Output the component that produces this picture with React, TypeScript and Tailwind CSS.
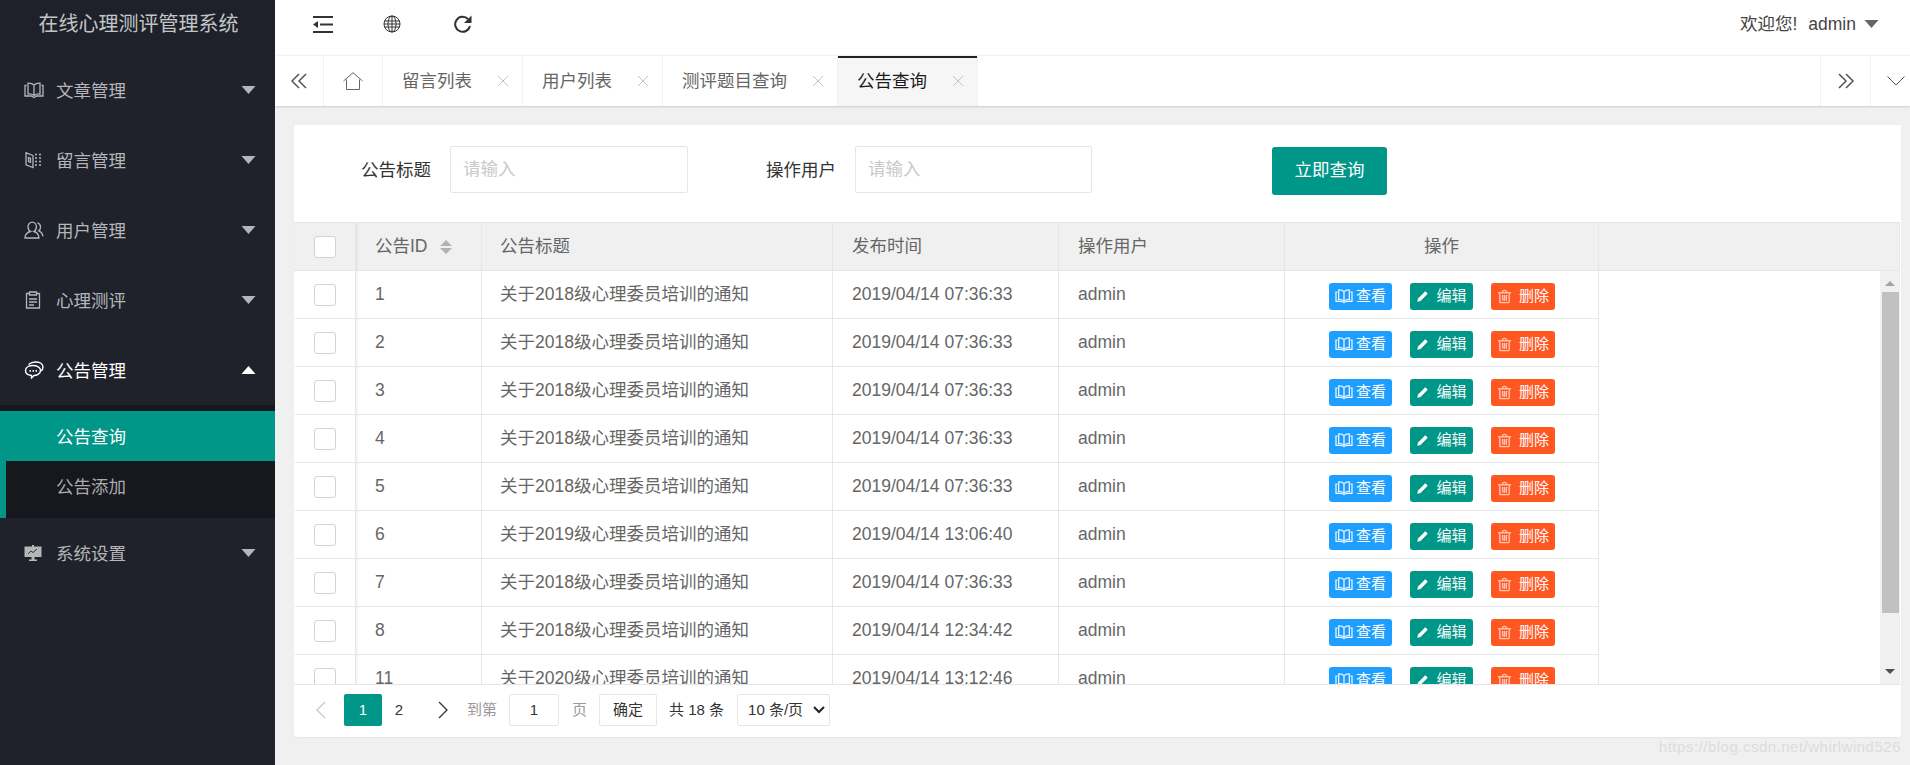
const rows = [
  ["1", "关于2018级心理委员培训的通知", "2019/04/14 07:36:33"],
  ["2", "关于2018级心理委员培训的通知", "2019/04/14 07:36:33"],
  ["3", "关于2018级心理委员培训的通知", "2019/04/14 07:36:33"],
  ["4", "关于2018级心理委员培训的通知", "2019/04/14 07:36:33"],
  ["5", "关于2018级心理委员培训的通知", "2019/04/14 07:36:33"],
  ["6", "关于2019级心理委员培训的通知", "2019/04/14 13:06:40"],
  ["7", "关于2018级心理委员培训的通知", "2019/04/14 07:36:33"],
  ["8", "关于2018级心理委员培训的通知", "2019/04/14 12:34:42"],
  ["11", "关于2020级心理委员培训的通知", "2019/04/14 13:12:46"],
];

const FONT = "font-['Liberation_Sans','Noto_Sans_CJK_SC',sans-serif]";

function BookIcon({ className }: { className?: string }) {
  return (
    <svg viewBox="0 0 20 18" fill="none" stroke="currentColor" strokeWidth="1.3" className={className}>
      <path d="M10 4C8.5 2.6 6.5 2 4 2.2V13c2.5-.2 4.5.3 6 1.5 1.5-1.2 3.500-1.700 6-1.500V2.200C13.500 2 11.500 2.600 10 4zM10 4v10.500" />
      <path d="M2.500 4.500H1V15h6.500l2.500 1.500 2.500-1.500H19V4.500h-1.500" />
    </svg>
  );
}

function NoteIcon({ className }: { className?: string }) {
  return (
    <svg viewBox="0 0 18 18" fill="none" stroke="currentColor" strokeWidth="1.3" className={className}>
      <path d="M9 4.5 2 1.800v12l7 2.700zM4.500 6.500l2 .8v4l-2-.8z" />
      <path d="M11 3.500h2M15 3.500h2M11 7h2M15 7h2M11 10.500h2M15 10.500h2M11 14h2M15 14h2" />
    </svg>
  );
}

function UserIcon({ className }: { className?: string }) {
  return (
    <svg viewBox="0 0 20 18" fill="none" stroke="currentColor" strokeWidth="1.3" className={className}>
      <path d="M6.500 10.500C4.500 9.500 4 7.800 4 5.800 4 3.200 5.800 1.200 8.200 1.200s4.200 2 4.200 4.600c0 2-.6 3.700-2.500 4.700 2.500.6 4.500 2.500 5 5.800v.7H1v-.7c.5-3.300 2.800-5.200 5.500-5.800z" />
      <path d="M13.500 1.800c2 .7 3 2.300 3 4.200 0 1.500-.5 3-1.700 3.800 2 .8 3.700 2.500 4.200 5.500" />
    </svg>
  );
}

function ClipIcon({ className }: { className?: string }) {
  return (
    <svg viewBox="0 0 18 18" fill="none" stroke="currentColor" strokeWidth="1.3" className={className}>
      <path d="M5.500 2.500H2.500v14.500h13V2.500h-3M5.500 1h7v3h-7zM5 8h8M5 11h8M5 14h5" />
    </svg>
  );
}

function ChatIcon({ className }: { className?: string }) {
  return (
    <svg viewBox="0 0 20 18" fill="none" stroke="currentColor" strokeWidth="1.4" className={className}>
      <path d="M9 4.500c4 0 7.500 1.800 7.500 5 0 3-3.500 5-6.500 5l-2.500 2.500v-2.500c-3-.3-6-2-6-5 0-3.200 3.500-5 7.500-5z" />
      <path d="M4.500 3.500C6.500 1.800 9 1 11.500 1c3.500 0 7.500 1.500 7.500 5 0 1.800-.7 3-2 4" />
      <path d="M5.500 9.800h1.500M8.500 9.800H10M11.500 9.800H13" strokeWidth="1.8" />
    </svg>
  );
}

function BoardIcon({ className }: { className?: string }) {
  return (
    <svg viewBox="0 0 18 18" className={className}>
      <path fill="currentColor" d="M8 1h2v1.500h7.500V13h-7v2.500H13V17H5v-1.500h2.500V13h-7V2.500H8z" />
      <path fill="none" stroke="#1f222b" strokeWidth="0.9" d="M4 10l3-3 2 1.500 4-3.500" />
    </svg>
  );
}

function PenIcon({ className }: { className?: string }) {
  return (
    <svg viewBox="0 0 16 16" fill="currentColor" className={className}>
      <path d="M11.500 1.500l3 3-9 9-4 1 1-4z" />
    </svg>
  );
}

function TrashIcon({ className }: { className?: string }) {
  return (
    <svg viewBox="0 0 16 16" fill="none" stroke="currentColor" strokeWidth="1.5" className={className}>
      <path d="M1 4h14M5.500 3.500C6 2 7 1.500 8 1.500s2 .5 2.500 2M3 5v8.500c0 .6.400 1 1 1h8c.6 0 1-.4 1-1V5M6 6.500v6M8 6.500v6M10 6.500v6" />
    </svg>
  );
}

function Caret({ up, color }: { up?: boolean; color: string }) {
  return (
    <svg viewBox="0 0 14 8" className="w-[15px] h-2">
      <path fill={color} d={up ? "M7 0l7 8H0z" : "M0 0h14L7 8z"} />
    </svg>
  );
}

function MenuItem({ icon, label, open }: { icon: React.ReactNode; label: string; open?: boolean }) {
  return (
    <div className={`flex items-center h-[70px] pl-6 pr-[19px] ${open ? "text-white" : "text-[#b5b6b9]"}`}>
      <span className="w-[32px] flex">{icon}</span>
      <span className="flex-1 text-[17.5px] pt-0.5">{label}</span>
      <Caret up={open} color={open ? "#ffffff" : "#b5b6b9"} />
    </div>
  );
}

function Tab({ label, wide, active }: { label: string; wide?: boolean; active?: boolean }) {
  return (
    <div
      className={`relative flex items-center pl-[19px] text-[17.5px] border-r border-[#f2f2f2] ${wide ? "w-[175px]" : "w-[140px]"} ${
        active ? "bg-[#f6f6f6] text-[#1a1a1a]" : "text-[#666666]"
      }`}
    >
      {active && <div className="absolute left-0 right-0 top-0 h-0.5 bg-[#20222a]" />}
      <span>{label}</span>
      <svg viewBox="0 0 10 10" className="absolute right-[14px] top-[20px] w-2.5 h-2.5" fill="none" stroke="#c2c2c2" strokeWidth="1">
        <path d="M0 0l10 10M10 0L0 10" />
      </svg>
    </div>
  );
}

function Check() {
  return <div className="w-[22px] h-[22px] rounded-[3px] border border-[#d2d2d2] bg-white" />;
}

function ActionButton({ bg, icon, label, w }: { bg: string; icon: React.ReactNode; label: string; w: string }) {
  return (
    <div className={`flex items-center justify-center gap-[3px] h-[27px] rounded-[3px] text-white text-[15px] ${bg} ${w}`}>
      {icon}
      <span>{label}</span>
    </div>
  );
}

export default function App() {
  return (
    <div className={`relative flex w-[1910px] h-[765px] overflow-hidden bg-[#f0f0f0] ${FONT}`}>
      <aside className="w-[275px] shrink-0 bg-[#1f222b] flex flex-col">
        <div className="h-[55px] shrink-0 flex items-center justify-center pl-0.5 pb-[7px] text-[20px] text-[#c4c5c7] bg-[#1e212a]">
          在线心理测评管理系统
        </div>
        <MenuItem icon={<BookIcon className="w-5 h-[18px]" />} label="文章管理" />
        <MenuItem icon={<NoteIcon className="w-[18px] h-[18px]" />} label="留言管理" />
        <MenuItem icon={<UserIcon className="w-5 h-[18px]" />} label="用户管理" />
        <MenuItem icon={<ClipIcon className="w-[18px] h-[18px]" />} label="心理测评" />
        <MenuItem icon={<ChatIcon className="w-5 h-[18px]" />} label="公告管理" open />
        <div className="h-[113px] shrink-0 bg-[#17181d] pt-1.5 flex flex-col">
          <div className="h-[50px] flex items-center pl-14 pt-0.5 bg-[#009688] text-white text-[17.5px]">公告查询</div>
          <div className="flex-1 border-l-[6px] border-[#009688] flex items-center pl-[50px] pb-1 text-[#a9aaac] text-[17.5px]">公告添加</div>
        </div>
        <MenuItem icon={<BoardIcon className="w-[18px] h-[18px]" />} label="系统设置" />
      </aside>

      <main className="flex-1 min-w-0 flex flex-col">
        <header className="h-[55px] shrink-0 bg-white flex items-center pb-[7px] text-[#393d49]">
          <div className="flex items-center flex-1">
            <svg viewBox="0 0 20 17" className="ml-[38px] w-5 h-[17px]" fill="#333333">
              <path d="M0 0h20v2H0zM7 7.500h13v2H7zM0 15h20v2H0zM0 8.500L5 5v7z" />
            </svg>
            <svg viewBox="0 0 18 18" className="ml-[50px] w-[18px] h-[18px]" fill="none" stroke="#333333" strokeWidth="1">
              <circle cx="9" cy="9" r="8" />
              <ellipse cx="9" cy="9" rx="4" ry="8" />
              <path d="M9 1v16M1.500 6h15M1.500 12h15M1 9h16" />
            </svg>
            <svg viewBox="0 0 18 18" className="ml-[53px] w-[18px] h-[18px]" fill="none" stroke="#333333" strokeWidth="2">
              <path d="M16 11A7.500 7.500 0 1 1 14 4" />
              <path d="M17.500 0.500v7.500H10z" fill="#333333" stroke="none" />
            </svg>
          </div>
          <div className="flex items-center pr-[31px] text-[17.5px] text-[#444444]">
            <span>欢迎您!</span>
            <span className="ml-[11px]">admin</span>
            <span className="ml-2 flex"><Caret color="#666666" /></span>
          </div>
        </header>

        <div className="relative h-[51px] shrink-0 flex bg-white border-t border-[#f2f2f2] shadow-[0_1px_2px_rgba(0,0,0,0.15)]">
          <div className="w-[49px] flex items-center justify-center border-r border-[#f2f2f2]">
            <svg viewBox="0 0 18 16" className="w-[18px] h-4" fill="none" stroke="#555555" strokeWidth="1.5"><path d="M9 1L2 8l7 7M16 1L9 8l7 7" /></svg>
          </div>
          <div className="w-[59px] flex items-center justify-center border-r border-[#f2f2f2]">
            <svg viewBox="0 0 20 18" className="w-5 h-[18px]" fill="none" stroke="#666666" strokeWidth="1"><path d="M.5 9L10 .7 19.500 9M3.500 7.500v10h13v-10" /></svg>
          </div>
          <Tab label="留言列表" />
          <Tab label="用户列表" />
          <Tab label="测评题目查询" wide />
          <Tab label="公告查询" active />
          <div className="ml-auto flex">
            <div className="w-[50px] flex items-center justify-center border-l border-[#f2f2f2]">
              <svg viewBox="0 0 18 16" className="w-[18px] h-4" fill="none" stroke="#555555" strokeWidth="1.5"><path d="M2 1l7 7-7 7M9 1l7 7-7 7" /></svg>
            </div>
            <div className="w-[40px] flex items-center justify-center pl-2.5 border-l border-[#f2f2f2]">
              <svg viewBox="0 0 18 10" className="w-[18px] h-2.5" fill="none" stroke="#555555" strokeWidth="1"><path d="M.5.500L9 9l8.500-8.500" /></svg>
            </div>
          </div>
        </div>

        <div className="flex-1 min-h-0 pt-[19px] pl-[19px] pr-[9px] pb-7">
          <div className="h-full bg-white rounded-[2px] shadow-[0_1px_2px_rgba(0,0,0,0.06)] flex flex-col">
            <div className="h-[97px] shrink-0 flex items-start pt-[21px] text-[17.5px] text-[#333333]">
              <span className="ml-[67px] mt-[11px]">公告标题</span>
              <div className="ml-[19px] w-[238px] h-[47px] border border-[#e6e6e6] rounded-[2px] flex items-center pl-3 pb-px text-[#c9c9c9]">请输入</div>
              <span className="ml-[78px] mt-[11px]">操作用户</span>
              <div className="ml-[19px] w-[237px] h-[47px] border border-[#e6e6e6] rounded-[2px] flex items-center pl-3 pb-px text-[#c9c9c9]">请输入</div>
              <div className="ml-[180px] mt-px w-[115px] h-[48px] rounded-[3px] bg-[#009688] text-white flex items-center justify-center pb-0.5">立即查询</div>
            </div>

            <div className="flex h-[49px] shrink-0 bg-[#f0f0f0] border-y border-[#e6e6e6] border-r mr-px text-[17.5px] text-[#666666]">
              <div className="w-[60px] ml-px flex items-center pl-[19px]"><Check /></div>
              <div className="w-[126px] border-l border-[#e6e6e6] flex items-center pl-[19px] shadow-[inset_3px_0_3px_-2px_rgba(0,0,0,0.08)]">
                公告ID
                <svg viewBox="0 0 12 14" className="ml-[12px] w-3 h-3.5"><path fill="#b2b2b2" d="M6 0l6 6H0zM0 8h12l-6 6z" /></svg>
              </div>
              <div className="w-[351px] border-l border-[#e6e6e6] flex items-center pl-[18px]">公告标题</div>
              <div className="w-[226px] border-l border-[#e6e6e6] flex items-center pl-[19px]">发布时间</div>
              <div className="w-[226px] border-l border-[#e6e6e6] flex items-center pl-[19px]">操作用户</div>
              <div className="w-[315px] border-x border-[#e6e6e6] flex items-center justify-center">操作</div>
            </div>

            <div className="relative flex-1 min-h-0 overflow-hidden flex">
              <div className="flex-1 min-w-0 ml-px">
                {rows.map((r) => (
                  <div key={r[0]} className="flex h-[48px] shrink-0 text-[17.5px] text-[#666666]">
                    <div className="w-[60px] border-b border-[#e6e6e6] flex items-center pl-[19px]"><Check /></div>
                    <div className="w-[126px] border-l border-b border-[#e6e6e6] flex items-center pl-[19px] shadow-[inset_3px_0_3px_-2px_rgba(0,0,0,0.08)]">{r[0]}</div>
                    <div className="w-[351px] border-l border-b border-[#e6e6e6] flex items-center pl-[18px]">{r[1]}</div>
                    <div className="w-[226px] border-l border-b border-[#e6e6e6] flex items-center pl-[19px]">{r[2]}</div>
                    <div className="w-[226px] border-l border-b border-[#e6e6e6] flex items-center pl-[19px]">admin</div>
                    <div className="w-[315px] border-x border-b border-[#e6e6e6] flex items-center gap-[18px] pl-[44px] pt-[3px]">
                      <ActionButton bg="bg-[#1e9fff]" w="w-[63px]" label="查看" icon={<BookIcon className="w-[18px] h-4" />} />
                      <ActionButton bg="bg-[#009688]" w="w-[63px]" label="编辑" icon={<PenIcon className="w-[13px] h-[13px] mr-1" />} />
                      <ActionButton bg="bg-[#ff5722]" w="w-[64px]" label="删除" icon={<TrashIcon className="w-[15px] h-[15px] mr-1 text-[#ffc4ae]" />} />
                    </div>
                  </div>
                ))}
              </div>
              <div className="w-[20px] shrink-0 bg-[#f0f0f0] flex flex-col items-center mr-px">
                <svg viewBox="0 0 10 5" className="w-2.5 h-[5px] mt-[10px]"><path fill="#a3a3a3" d="M5 0l5 5H0z" /></svg>
                <div className="w-[17px] h-[321px] mt-[6px] bg-[#c0c0c0]" />
                <svg viewBox="0 0 10 5" className="w-2.5 h-[5px] mt-auto mb-[10px]"><path fill="#505050" d="M0 0h10L5 5z" /></svg>
              </div>
            </div>

            <div className="h-[53px] shrink-0 border-t border-[#e6e6e6] flex items-center pb-0.5 text-[15px] text-[#333333]">
              <svg viewBox="0 0 10 18" className="ml-[22px] w-2.5 h-[18px]" fill="none" stroke="#c8c8c8" strokeWidth="1.3"><path d="M9 1L1 9l8 8" /></svg>
              <div className="ml-[18px] w-[38px] h-8 rounded-[2px] bg-[#009688] text-white flex items-center justify-center">1</div>
              <div className="w-[34px] text-center">2</div>
              <svg viewBox="0 0 10 18" className="ml-[22px] w-2.5 h-[18px]" fill="none" stroke="#333333" strokeWidth="1.3"><path d="M1 1l8 8-8 8" /></svg>
              <span className="ml-[19px] text-[#999999]">到第</span>
              <div className="ml-3 w-[50px] h-8 border border-[#e6e6e6] rounded-[2px] flex items-center justify-center">1</div>
              <span className="ml-[13px] text-[#999999]">页</span>
              <div className="ml-3 w-[58px] h-8 border border-[#e6e6e6] rounded-[2px] flex items-center justify-center">确定</div>
              <span className="ml-3">共 18 条</span>
              <div className="ml-[13px] w-[93px] h-8 border border-[#e6e6e6] rounded-[2px] flex items-center pl-2.5 gap-2.5">
                10 条/页
                <svg viewBox="0 0 12 8" className="w-3 h-2" fill="none" stroke="#222222" strokeWidth="2"><path d="M1 1l5 5 5-5" /></svg>
              </div>
            </div>
          </div>
        </div>
      </main>

      <div className="absolute right-[9px] top-[736px] text-[15px] text-[#dcdcdc] tracking-[0.5px]">https://blog.csdn.net/whirlwind526</div>
    </div>
  );
}
